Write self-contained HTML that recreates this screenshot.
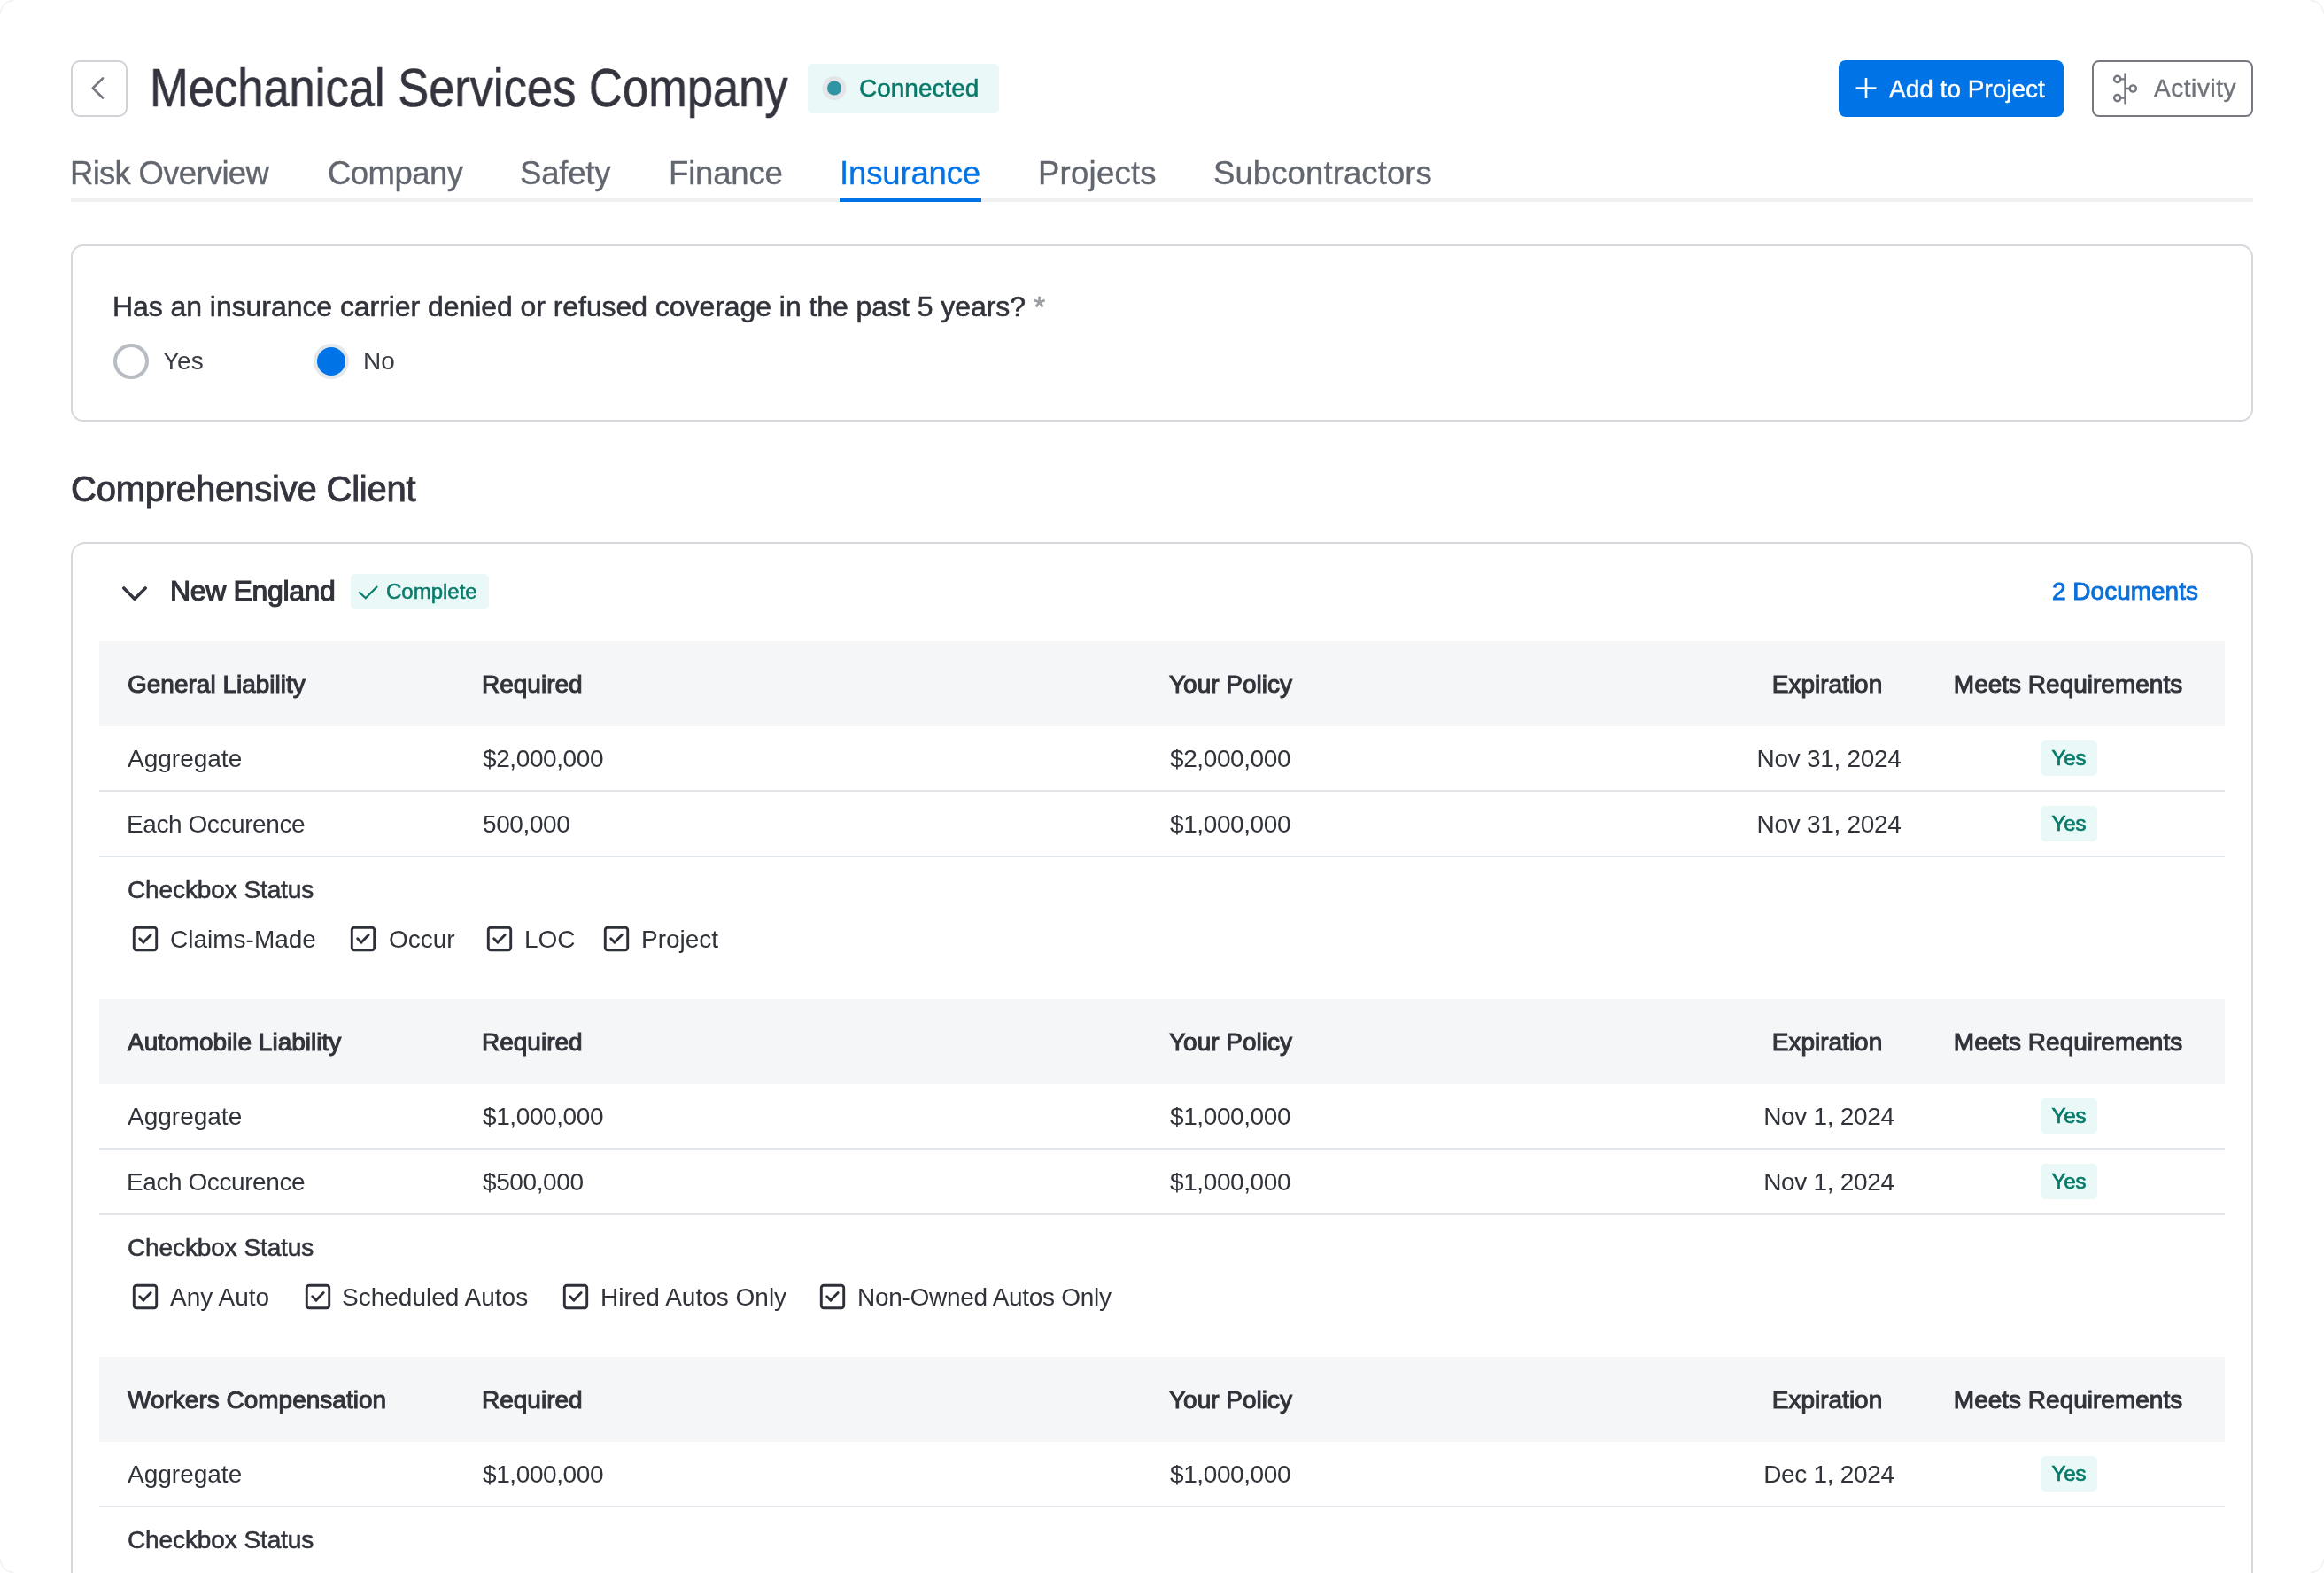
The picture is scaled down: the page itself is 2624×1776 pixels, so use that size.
<!DOCTYPE html>
<html><head><meta charset="utf-8"><title>Insurance</title>
<style>
html,body{margin:0;padding:0;background:#fff;}
body{width:2624px;height:1776px;position:relative;overflow:hidden;font-family:"Liberation Sans", sans-serif;}
.t{position:absolute;white-space:nowrap;will-change:transform;}
.r{position:absolute;}
svg.r{overflow:visible;}
</style></head><body>
<svg class="r" style="left:0;top:0" width="2624" height="1776" fill="none" stroke="#e8eaed" stroke-width="1"><path d="M0.5 15 A14.5 14.5 0 0 1 15 0.5"/><path d="M2609 0.5 A14.5 14.5 0 0 1 2623.5 15"/><path d="M0.5 1761 A14.5 14.5 0 0 0 15 1775.5"/><path d="M2623.5 1761 A14.5 14.5 0 0 1 2609 1775.5"/></svg>
<div class="r" style="left:80px;top:68px;width:64px;height:64px;border:2px solid #cfd3d8;box-sizing:border-box;border-radius:10px;"></div>
<svg class="r" style="left:0;top:0" width="200" height="200"><polyline points="116,88.5 104.8,99.5 116,110.5" fill="none" stroke="#76797f" stroke-width="2.6" stroke-linecap="round" stroke-linejoin="round"/></svg>
<div class="t" style="left:168.5px;top:68.03px;font-size:61.5px;line-height:61.5px;color:#33343e;font-weight:400;transform:scaleX(0.8535);transform-origin:0 0;-webkit-text-stroke:0.65px #33343e;">Mechanical Services Company</div>
<div class="r" style="left:912px;top:72px;width:216px;height:56px;background:#eaf9f7;border-radius:5px;"></div>
<svg class="r" style="left:0;top:0" width="1200" height="200"><circle cx="942" cy="99.5" r="13.5" fill="#e3e5e9"/><circle cx="942" cy="99.5" r="8" fill="#3194a4"/></svg>
<div class="t" style="left:970.2px;top:86.20px;font-size:28px;line-height:28px;color:#077a6a;font-weight:400;-webkit-text-stroke:0.5px #077a6a;">Connected</div>
<div class="r" style="left:2076px;top:68px;width:254px;height:64px;background:#0073e6;border-radius:8px;"></div>
<svg class="r" style="left:0;top:0" width="2624" height="200"><path d="M2107 88 V111 M2095.5 99.5 H2118.5" stroke="#fff" stroke-width="2.6"/></svg>
<div class="t" style="left:2133.2px;top:86.90px;font-size:28px;line-height:28px;color:#fff;font-weight:400;-webkit-text-stroke:0.4px #fff;">Add to Project</div>
<div class="r" style="left:2362px;top:68px;width:182px;height:64px;border:2px solid #76797f;box-sizing:border-box;border-radius:8px;"></div>
<svg class="r" style="left:0;top:0" width="2624" height="200" fill="none" stroke="#74777e" stroke-width="2.4"><path d="M2399.5 82.5 V117.5"/><circle cx="2390.7" cy="89.4" r="3.6"/><circle cx="2390.7" cy="110.6" r="3.6"/><circle cx="2408.3" cy="100" r="3.6"/><path d="M2394.3 89.4 H2399.5 M2394.3 110.6 H2399.5 M2399.5 100 H2404.7"/></svg>
<div class="t" style="left:2432px;top:85.70px;font-size:28px;line-height:28px;color:#6f737a;font-weight:400;letter-spacing:0.55px;-webkit-text-stroke:0.4px #6f737a;">Activity</div>
<div class="r" style="left:80px;top:224px;width:2464px;height:4px;background:#eef0f2;"></div>
<div class="t" style="left:79.4px;top:177.67px;font-size:36.5px;line-height:36.5px;color:#62666e;font-weight:400;letter-spacing:-0.7px;-webkit-text-stroke:0.35px #62666e;">Risk Overview</div>
<div class="t" style="left:369.5px;top:177.67px;font-size:36.5px;line-height:36.5px;color:#62666e;font-weight:400;letter-spacing:-0.55px;-webkit-text-stroke:0.35px #62666e;">Company</div>
<div class="t" style="left:587.2px;top:177.67px;font-size:36.5px;line-height:36.5px;color:#62666e;font-weight:400;letter-spacing:-0.18px;-webkit-text-stroke:0.35px #62666e;">Safety</div>
<div class="t" style="left:754.7px;top:177.67px;font-size:36.5px;line-height:36.5px;color:#62666e;font-weight:400;letter-spacing:-0.17px;-webkit-text-stroke:0.35px #62666e;">Finance</div>
<div class="t" style="left:947.8px;top:177.67px;font-size:36.5px;line-height:36.5px;color:#0073e6;font-weight:400;letter-spacing:-0.15px;-webkit-text-stroke:0.35px #0073e6;">Insurance</div>
<div class="t" style="left:1171.7px;top:177.67px;font-size:36.5px;line-height:36.5px;color:#62666e;font-weight:400;letter-spacing:0.25px;-webkit-text-stroke:0.35px #62666e;">Projects</div>
<div class="t" style="left:1369.5px;top:177.67px;font-size:36.5px;line-height:36.5px;color:#62666e;font-weight:400;letter-spacing:0.1px;-webkit-text-stroke:0.35px #62666e;">Subcontractors</div>
<div class="r" style="left:948px;top:224px;width:160px;height:4px;background:#0073e6;"></div>
<div class="r" style="left:80px;top:276px;width:2464px;height:200px;border:2px solid #d5d9de;box-sizing:border-box;border-radius:14px;"></div>
<div class="t" style="left:126.8px;top:330.30px;font-size:32px;line-height:32px;color:#31333b;font-weight:400;letter-spacing:-0.06px;-webkit-text-stroke:0.55px #31333b;">Has an insurance carrier denied or refused coverage in the past 5 years?</div>
<div class="t" style="left:1166.5px;top:329.10px;font-size:34px;line-height:34px;color:#9a9da2;font-weight:400;-webkit-text-stroke:0.6px #9a9da2;">*</div>
<svg class="r" style="left:0;top:0" width="600" height="500"><circle cx="148" cy="408" r="18" fill="#fff" stroke="#b8bdc3" stroke-width="4"/><circle cx="374" cy="408" r="18" fill="#0073e6" stroke="#e5e8eb" stroke-width="4"/></svg>
<div class="t" style="left:184.4px;top:394.20px;font-size:28px;line-height:28px;color:#3a3d44;font-weight:400;">Yes</div>
<div class="t" style="left:410.4px;top:394.20px;font-size:28px;line-height:28px;color:#3a3d44;font-weight:400;">No</div>
<div class="t" style="left:79.8px;top:532.20px;font-size:40px;line-height:40px;color:#33343d;font-weight:400;letter-spacing:-0.2px;-webkit-text-stroke:0.9px #33343d;">Comprehensive Client</div>
<div class="r" style="left:80px;top:612px;width:2464px;height:1288px;border:2px solid #d5d9de;box-sizing:border-box;border-radius:16px;"></div>
<svg class="r" style="left:0;top:0" width="600" height="800"><polyline points="139.8,664 152,676.2 164.2,664" fill="none" stroke="#33363f" stroke-width="3.6" stroke-linecap="round" stroke-linejoin="round"/></svg>
<div class="t" style="left:191.6px;top:650.80px;font-size:32px;line-height:32px;color:#31333b;font-weight:400;letter-spacing:-0.35px;-webkit-text-stroke:1.1px #31333b;">New England</div>
<div class="r" style="left:396px;top:648px;width:156px;height:40px;background:#eaf9f7;border-radius:5px;"></div>
<svg class="r" style="left:0;top:0" width="600" height="800"><polyline points="405.3,668.4 412.9,675.3 426.1,662" fill="none" stroke="#077f6d" stroke-width="2.2"/></svg>
<div class="t" style="left:435.6px;top:655.60px;font-size:24px;line-height:24px;color:#077a6a;font-weight:400;-webkit-text-stroke:0.5px #077a6a;">Complete</div>
<div class="t" style="left:2317px;top:654.20px;font-size:28px;line-height:28px;color:#0a70d9;font-weight:400;-webkit-text-stroke:0.9px #0a70d9;">2 Documents</div>
<div class="r" style="left:112px;top:724px;width:2400px;height:96px;background:#f5f6f8;"></div>
<div class="t" style="left:143.6px;top:758.90px;font-size:28px;line-height:28px;color:#31333b;font-weight:400;-webkit-text-stroke:1.05px #31333b;">General Liability</div>
<div class="t" style="left:543.6px;top:758.90px;font-size:28px;line-height:28px;color:#31333b;font-weight:400;-webkit-text-stroke:1.05px #31333b;">Required</div>
<div class="t" style="left:1320px;top:758.90px;font-size:28px;line-height:28px;color:#31333b;font-weight:400;-webkit-text-stroke:1.05px #31333b;">Your Policy</div>
<div class="t" style="left:1562.6px;width:1000px;text-align:center;top:758.90px;font-size:28px;line-height:28px;color:#31333b;font-weight:400;-webkit-text-stroke:1.05px #31333b;">Expiration</div>
<div class="t" style="left:1835px;width:1000px;text-align:center;top:758.90px;font-size:28px;line-height:28px;color:#31333b;font-weight:400;-webkit-text-stroke:1.05px #31333b;">Meets Requirements</div>
<div class="t" style="left:144px;top:842.70px;font-size:28px;line-height:28px;color:#31333b;font-weight:400;">Aggregate</div>
<div class="t" style="left:544.6px;top:842.70px;font-size:28px;line-height:28px;color:#31333b;font-weight:400;letter-spacing:-0.4px;">$2,000,000</div>
<div class="t" style="left:1321px;top:842.70px;font-size:28px;line-height:28px;color:#31333b;font-weight:400;letter-spacing:-0.4px;">$2,000,000</div>
<div class="t" style="left:1564.5px;width:1000px;text-align:center;top:842.70px;font-size:28px;line-height:28px;color:#31333b;font-weight:400;letter-spacing:-0.3px;">Nov 31, 2024</div>
<div class="r" style="left:2304px;top:836px;width:64px;height:40px;background:#eaf9f7;border-radius:5px;"></div>
<div class="t" style="left:1836px;width:1000px;text-align:center;top:843.60px;font-size:24px;line-height:24px;color:#077a6a;font-weight:400;-webkit-text-stroke:0.7px #077a6a;">Yes</div>
<div class="r" style="left:112px;top:892px;width:2400px;height:2px;background:#e3e6ea;"></div>
<div class="t" style="left:143px;top:916.70px;font-size:28px;line-height:28px;color:#31333b;font-weight:400;letter-spacing:-0.42px;">Each Occurence</div>
<div class="t" style="left:544.6px;top:916.70px;font-size:28px;line-height:28px;color:#31333b;font-weight:400;letter-spacing:-0.4px;">500,000</div>
<div class="t" style="left:1321px;top:916.70px;font-size:28px;line-height:28px;color:#31333b;font-weight:400;letter-spacing:-0.4px;">$1,000,000</div>
<div class="t" style="left:1564.5px;width:1000px;text-align:center;top:916.70px;font-size:28px;line-height:28px;color:#31333b;font-weight:400;letter-spacing:-0.3px;">Nov 31, 2024</div>
<div class="r" style="left:2304px;top:910px;width:64px;height:40px;background:#eaf9f7;border-radius:5px;"></div>
<div class="t" style="left:1836px;width:1000px;text-align:center;top:917.60px;font-size:24px;line-height:24px;color:#077a6a;font-weight:400;-webkit-text-stroke:0.7px #077a6a;">Yes</div>
<div class="r" style="left:112px;top:966px;width:2400px;height:2px;background:#e3e6ea;"></div>
<div class="t" style="left:143.6px;top:991.20px;font-size:28px;line-height:28px;color:#31333b;font-weight:400;letter-spacing:-0.1px;-webkit-text-stroke:0.6px #31333b;">Checkbox Status</div>
<svg class="r" style="left:148px;top:1044px" width="32" height="32" fill="none" stroke="#2e3039" stroke-width="2.9"><rect x="3.3" y="3.3" width="25.4" height="25.4" rx="2.8"/><polyline points="9.7,15.8 14,20.1 22.2,11.5" stroke-linecap="round" stroke-linejoin="round"/></svg>
<div class="t" style="left:191.6px;top:1046.70px;font-size:28px;line-height:28px;color:#31333b;font-weight:400;">Claims-Made</div>
<svg class="r" style="left:393.8px;top:1044px" width="32" height="32" fill="none" stroke="#2e3039" stroke-width="2.9"><rect x="3.3" y="3.3" width="25.4" height="25.4" rx="2.8"/><polyline points="9.7,15.8 14,20.1 22.2,11.5" stroke-linecap="round" stroke-linejoin="round"/></svg>
<div class="t" style="left:438.6px;top:1046.70px;font-size:28px;line-height:28px;color:#31333b;font-weight:400;">Occur</div>
<svg class="r" style="left:548px;top:1044px" width="32" height="32" fill="none" stroke="#2e3039" stroke-width="2.9"><rect x="3.3" y="3.3" width="25.4" height="25.4" rx="2.8"/><polyline points="9.7,15.8 14,20.1 22.2,11.5" stroke-linecap="round" stroke-linejoin="round"/></svg>
<div class="t" style="left:592.1px;top:1046.70px;font-size:28px;line-height:28px;color:#31333b;font-weight:400;">LOC</div>
<svg class="r" style="left:680px;top:1044px" width="32" height="32" fill="none" stroke="#2e3039" stroke-width="2.9"><rect x="3.3" y="3.3" width="25.4" height="25.4" rx="2.8"/><polyline points="9.7,15.8 14,20.1 22.2,11.5" stroke-linecap="round" stroke-linejoin="round"/></svg>
<div class="t" style="left:724.1px;top:1046.70px;font-size:28px;line-height:28px;color:#31333b;font-weight:400;">Project</div>
<div class="r" style="left:112px;top:1128px;width:2400px;height:96px;background:#f5f6f8;"></div>
<div class="t" style="left:143.6px;top:1162.90px;font-size:28px;line-height:28px;color:#31333b;font-weight:400;-webkit-text-stroke:1.05px #31333b;">Automobile Liability</div>
<div class="t" style="left:543.6px;top:1162.90px;font-size:28px;line-height:28px;color:#31333b;font-weight:400;-webkit-text-stroke:1.05px #31333b;">Required</div>
<div class="t" style="left:1320px;top:1162.90px;font-size:28px;line-height:28px;color:#31333b;font-weight:400;-webkit-text-stroke:1.05px #31333b;">Your Policy</div>
<div class="t" style="left:1562.6px;width:1000px;text-align:center;top:1162.90px;font-size:28px;line-height:28px;color:#31333b;font-weight:400;-webkit-text-stroke:1.05px #31333b;">Expiration</div>
<div class="t" style="left:1835px;width:1000px;text-align:center;top:1162.90px;font-size:28px;line-height:28px;color:#31333b;font-weight:400;-webkit-text-stroke:1.05px #31333b;">Meets Requirements</div>
<div class="t" style="left:144px;top:1246.70px;font-size:28px;line-height:28px;color:#31333b;font-weight:400;">Aggregate</div>
<div class="t" style="left:544.6px;top:1246.70px;font-size:28px;line-height:28px;color:#31333b;font-weight:400;letter-spacing:-0.4px;">$1,000,000</div>
<div class="t" style="left:1321px;top:1246.70px;font-size:28px;line-height:28px;color:#31333b;font-weight:400;letter-spacing:-0.4px;">$1,000,000</div>
<div class="t" style="left:1564.5px;width:1000px;text-align:center;top:1246.70px;font-size:28px;line-height:28px;color:#31333b;font-weight:400;letter-spacing:-0.3px;">Nov 1, 2024</div>
<div class="r" style="left:2304px;top:1240px;width:64px;height:40px;background:#eaf9f7;border-radius:5px;"></div>
<div class="t" style="left:1836px;width:1000px;text-align:center;top:1247.60px;font-size:24px;line-height:24px;color:#077a6a;font-weight:400;-webkit-text-stroke:0.7px #077a6a;">Yes</div>
<div class="r" style="left:112px;top:1296px;width:2400px;height:2px;background:#e3e6ea;"></div>
<div class="t" style="left:143px;top:1320.70px;font-size:28px;line-height:28px;color:#31333b;font-weight:400;letter-spacing:-0.42px;">Each Occurence</div>
<div class="t" style="left:544.6px;top:1320.70px;font-size:28px;line-height:28px;color:#31333b;font-weight:400;letter-spacing:-0.4px;">$500,000</div>
<div class="t" style="left:1321px;top:1320.70px;font-size:28px;line-height:28px;color:#31333b;font-weight:400;letter-spacing:-0.4px;">$1,000,000</div>
<div class="t" style="left:1564.5px;width:1000px;text-align:center;top:1320.70px;font-size:28px;line-height:28px;color:#31333b;font-weight:400;letter-spacing:-0.3px;">Nov 1, 2024</div>
<div class="r" style="left:2304px;top:1314px;width:64px;height:40px;background:#eaf9f7;border-radius:5px;"></div>
<div class="t" style="left:1836px;width:1000px;text-align:center;top:1321.60px;font-size:24px;line-height:24px;color:#077a6a;font-weight:400;-webkit-text-stroke:0.7px #077a6a;">Yes</div>
<div class="r" style="left:112px;top:1370px;width:2400px;height:2px;background:#e3e6ea;"></div>
<div class="t" style="left:143.6px;top:1395.20px;font-size:28px;line-height:28px;color:#31333b;font-weight:400;letter-spacing:-0.1px;-webkit-text-stroke:0.6px #31333b;">Checkbox Status</div>
<svg class="r" style="left:148px;top:1448px" width="32" height="32" fill="none" stroke="#2e3039" stroke-width="2.9"><rect x="3.3" y="3.3" width="25.4" height="25.4" rx="2.8"/><polyline points="9.7,15.8 14,20.1 22.2,11.5" stroke-linecap="round" stroke-linejoin="round"/></svg>
<div class="t" style="left:192.1px;top:1450.70px;font-size:28px;line-height:28px;color:#31333b;font-weight:400;">Any Auto</div>
<svg class="r" style="left:342.5px;top:1448px" width="32" height="32" fill="none" stroke="#2e3039" stroke-width="2.9"><rect x="3.3" y="3.3" width="25.4" height="25.4" rx="2.8"/><polyline points="9.7,15.8 14,20.1 22.2,11.5" stroke-linecap="round" stroke-linejoin="round"/></svg>
<div class="t" style="left:385.6px;top:1450.70px;font-size:28px;line-height:28px;color:#31333b;font-weight:400;">Scheduled Autos</div>
<svg class="r" style="left:634px;top:1448px" width="32" height="32" fill="none" stroke="#2e3039" stroke-width="2.9"><rect x="3.3" y="3.3" width="25.4" height="25.4" rx="2.8"/><polyline points="9.7,15.8 14,20.1 22.2,11.5" stroke-linecap="round" stroke-linejoin="round"/></svg>
<div class="t" style="left:677.6px;top:1450.70px;font-size:28px;line-height:28px;color:#31333b;font-weight:400;">Hired Autos Only</div>
<svg class="r" style="left:924px;top:1448px" width="32" height="32" fill="none" stroke="#2e3039" stroke-width="2.9"><rect x="3.3" y="3.3" width="25.4" height="25.4" rx="2.8"/><polyline points="9.7,15.8 14,20.1 22.2,11.5" stroke-linecap="round" stroke-linejoin="round"/></svg>
<div class="t" style="left:968.1px;top:1450.70px;font-size:28px;line-height:28px;color:#31333b;font-weight:400;letter-spacing:-0.3px;">Non-Owned Autos Only</div>
<div class="r" style="left:112px;top:1532px;width:2400px;height:96px;background:#f5f6f8;"></div>
<div class="t" style="left:143.6px;top:1566.90px;font-size:28px;line-height:28px;color:#31333b;font-weight:400;-webkit-text-stroke:1.05px #31333b;">Workers Compensation</div>
<div class="t" style="left:543.6px;top:1566.90px;font-size:28px;line-height:28px;color:#31333b;font-weight:400;-webkit-text-stroke:1.05px #31333b;">Required</div>
<div class="t" style="left:1320px;top:1566.90px;font-size:28px;line-height:28px;color:#31333b;font-weight:400;-webkit-text-stroke:1.05px #31333b;">Your Policy</div>
<div class="t" style="left:1562.6px;width:1000px;text-align:center;top:1566.90px;font-size:28px;line-height:28px;color:#31333b;font-weight:400;-webkit-text-stroke:1.05px #31333b;">Expiration</div>
<div class="t" style="left:1835px;width:1000px;text-align:center;top:1566.90px;font-size:28px;line-height:28px;color:#31333b;font-weight:400;-webkit-text-stroke:1.05px #31333b;">Meets Requirements</div>
<div class="t" style="left:144px;top:1650.70px;font-size:28px;line-height:28px;color:#31333b;font-weight:400;">Aggregate</div>
<div class="t" style="left:544.6px;top:1650.70px;font-size:28px;line-height:28px;color:#31333b;font-weight:400;letter-spacing:-0.4px;">$1,000,000</div>
<div class="t" style="left:1321px;top:1650.70px;font-size:28px;line-height:28px;color:#31333b;font-weight:400;letter-spacing:-0.4px;">$1,000,000</div>
<div class="t" style="left:1564.5px;width:1000px;text-align:center;top:1650.70px;font-size:28px;line-height:28px;color:#31333b;font-weight:400;letter-spacing:-0.3px;">Dec 1, 2024</div>
<div class="r" style="left:2304px;top:1644px;width:64px;height:40px;background:#eaf9f7;border-radius:5px;"></div>
<div class="t" style="left:1836px;width:1000px;text-align:center;top:1651.60px;font-size:24px;line-height:24px;color:#077a6a;font-weight:400;-webkit-text-stroke:0.7px #077a6a;">Yes</div>
<div class="r" style="left:112px;top:1700px;width:2400px;height:2px;background:#e3e6ea;"></div>
<div class="t" style="left:143.6px;top:1725.20px;font-size:28px;line-height:28px;color:#31333b;font-weight:400;letter-spacing:-0.1px;-webkit-text-stroke:0.6px #31333b;">Checkbox Status</div>
</body></html>
